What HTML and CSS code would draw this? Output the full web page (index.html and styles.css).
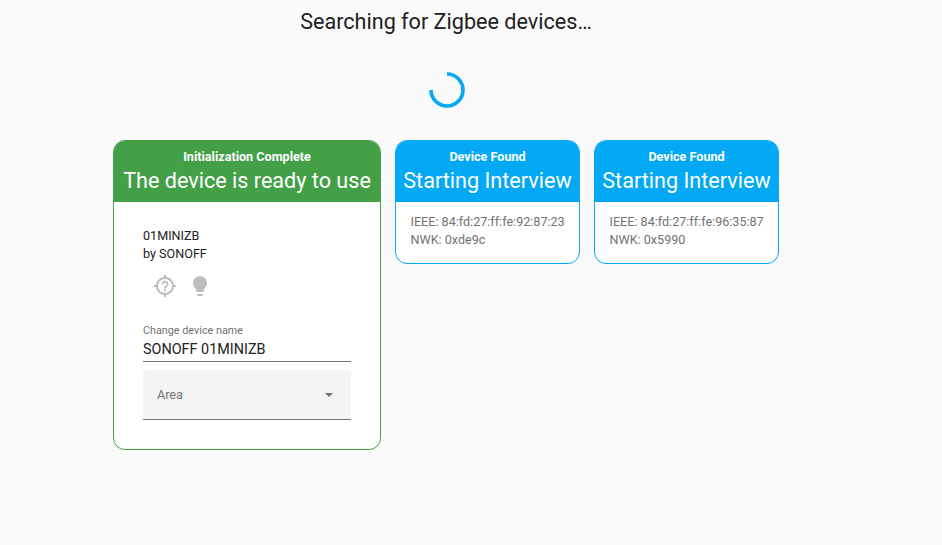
FILE: index.html
```html
<!DOCTYPE html>
<html lang="en">
<head>
  <meta charset="UTF-8" />
  <title>Searching for Zigbee devices</title>
  <link rel="stylesheet" href="styles.css">
</head>
<body>
  <div class="container">
    <h1>Searching for Zigbee devices…</h1>
    <div class="spinner">
      <svg width="36" height="36" viewBox="0 0 36 36">
        <path d="M18 2A16 16 0 1 1 2 18" fill="none" stroke="#03a9f4" stroke-width="3.6" />
      </svg>
    </div>
    <div class="devices">
      <div class="card ready">
        <div class="card-head">
          <div class="status">Initialization Complete</div>
          <div class="headline">The device is ready to use</div>
        </div>
        <div class="card-body wide">
          <div class="model">01MINIZB</div>
          <div class="model">by SONOFF</div>
          <div class="icons">
            <svg width="24" height="24" viewBox="0 0 24 24"><path d="M3.05 13H1V11H3.05C3.5 6.83 6.83 3.5 11 3.05V1H13V3.05C17.17 3.5 20.5 6.83 20.95 11H23V13H20.95C20.5 17.17 17.17 20.5 13 20.95V23H11V20.95C6.83 20.5 3.5 17.17 3.05 13M12 5C8.13 5 5 8.13 5 12S8.13 19 12 19 19 15.87 19 12 15.87 5 12 5M11.13 17.25H12.88V15.5H11.13V17.25M12 6.75C10.07 6.75 8.5 8.32 8.5 10.25H10.25C10.25 9.28 11.03 8.5 12 8.5S13.75 9.28 13.75 10.25C13.75 12 11.13 11.78 11.13 14.63H12.88C12.88 12.66 15.5 12.44 15.5 10.25C15.5 8.32 13.93 6.75 12 6.75Z" /></svg>
            <svg width="24" height="24" viewBox="0 0 24 24"><path d="M12,2A7,7 0 0,0 5,9C5,11.38 6.19,13.47 8,14.74V17A1,1 0 0,0 9,18H15A1,1 0 0,0 16,17V14.74C17.81,13.47 19,11.38 19,9A7,7 0 0,0 12,2M9,21A1,1 0 0,0 10,22H14A1,1 0 0,0 15,21V20H9V21Z" /></svg>
          </div>
          <div class="field">
            <div class="field-label">Change device name</div>
            <div class="field-value">SONOFF 01MINIZB</div>
          </div>
          <div class="select">
            <span>Area</span>
            <span class="arrow"></span>
          </div>
        </div>
      </div>
      <div class="card">
        <div class="card-head">
          <div class="status">Device Found</div>
          <div class="headline">Starting Interview</div>
        </div>
        <div class="card-body">
          <div>IEEE: 84:fd:27:ff:fe:92:87:23</div>
          <div>NWK: 0xde9c</div>
        </div>
      </div>
      <div class="card">
        <div class="card-head">
          <div class="status">Device Found</div>
          <div class="headline">Starting Interview</div>
        </div>
        <div class="card-body">
          <div>IEEE: 84:fd:27:ff:fe:96:35:87</div>
          <div>NWK: 0x5990</div>
        </div>
      </div>
    </div>
  </div>
</body>
</html>
```

FILE: styles.css
```css
* {
  box-sizing: border-box;
  margin: 0;
  padding: 0;
}
body {
  font-family: 'Roboto', sans-serif;
  background: #fafafa;
  color: #212121;
  height: 545px;
  overflow: hidden;
}
.container {
  width: 892px;
}
h1 {
  font-size: 21.6px;
  font-weight: 400;
  line-height: 24px;
  text-align: center;
  padding-top: 10px;
}
.spinner {
  display: flex;
  justify-content: center;
  margin-top: 38px;
  padding-left: 1px;
  height: 36px;
}
.devices {
  display: flex;
  justify-content: center;
  align-items: flex-start;
  gap: 14px;
  margin-top: 32px;
}
.card {
  width: 185px;
  background: #fff;
  border: 1px solid #03a9f4;
  border-radius: 12px;
  overflow: hidden;
}
.card.ready {
  width: 268px;
  border-color: #43a047;
}
.card-head {
  height: 62px;
  margin: -1px -1px 0;
  padding-top: 9px;
  background: #03a9f4;
  color: #fff;
  text-align: center;
}
.ready .card-head {
  background: #43a047;
}
.status {
  font-size: 12.6px;
  font-weight: 700;
  line-height: 16px;
}
.headline {
  font-size: 21.6px;
  font-weight: 400;
  line-height: 26px;
  margin-top: 3px;
  white-space: nowrap;
}
.card-body {
  padding: 11px 14.5px 14px;
  font-size: 12.6px;
  line-height: 18px;
  color: #727272;
  white-space: nowrap;
}
.card-body.wide {
  padding: 25px 29px 29px;
  color: #212121;
}
.icons {
  display: flex;
  gap: 11px;
  margin: 11px 0 0 10px;
  height: 24px;
}
.icons svg {
  fill: #bdbdbd;
}
.field {
  margin-top: 26px;
  border-bottom: 1px solid #757575;
  height: 38px;
}
.field-label {
  font-size: 10.8px;
  line-height: 14px;
  color: #727272;
}
.field-value {
  font-size: 14.4px;
  line-height: 18px;
  margin-top: 3px;
}
.select {
  display: flex;
  justify-content: space-between;
  align-items: center;
  height: 50px;
  margin-top: 8px;
  padding: 0 18px 0 14px;
  background: #f5f5f5;
  border-radius: 4px 4px 0 0;
  border-bottom: 1px solid #757575;
  color: #727272;
}
.arrow {
  width: 0;
  height: 0;
  margin-top: 1px;
  border-left: 4.5px solid transparent;
  border-right: 4.5px solid transparent;
  border-top: 4.5px solid #727272;
}
```
